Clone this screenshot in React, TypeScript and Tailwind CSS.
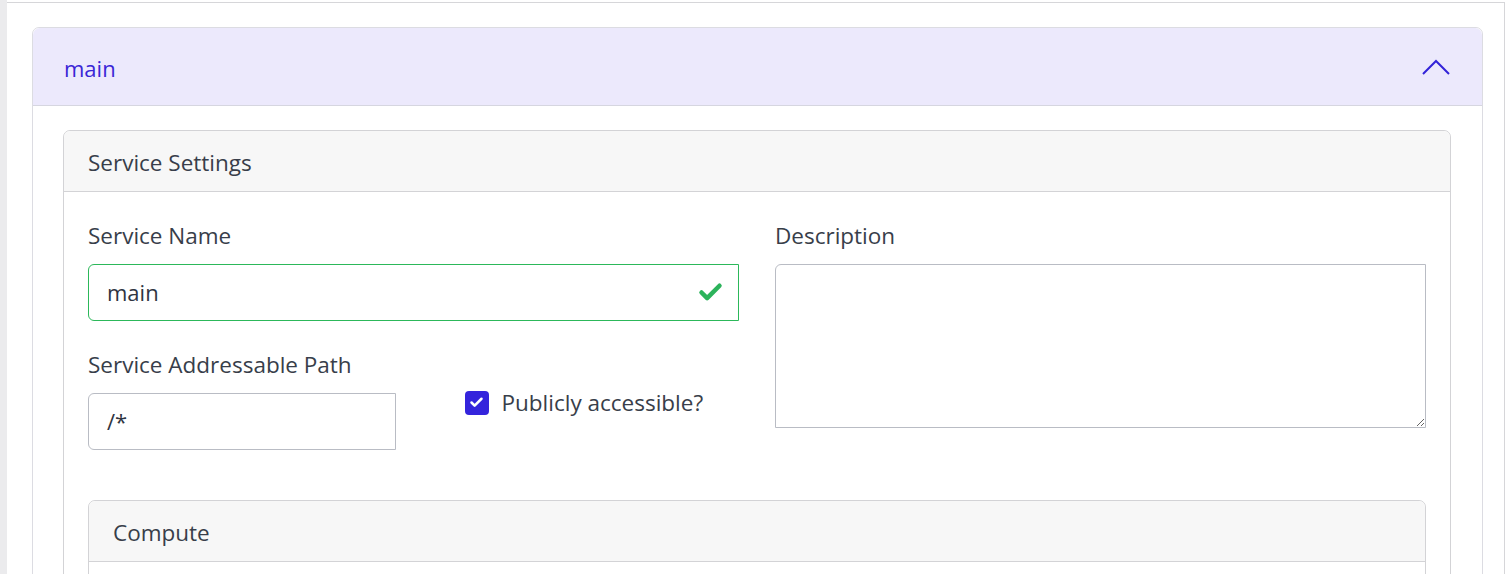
import { Check } from "lucide-react";

const font = { fontFamily: '"Open Sans", "Noto Sans", sans-serif' };

function Card({ title, children }: { title: string; children?: React.ReactNode }) {
  return (
    <div className="rounded-[7px] border border-[#d3d3d6] bg-white">
      <div className="flex h-[61px] items-center rounded-t-[7px] border-b border-[#d3d3d6] bg-[#f7f7f7] px-6 pt-[3px] text-[22.5px] text-[#383e4a]">
        {title}
      </div>
      {children}
    </div>
  );
}

export default function App() {
  return (
    <div className="flex h-[574px] overflow-hidden bg-white" style={font}>
      <div className="w-[7px] shrink-0 bg-[#ebebed]" />
      <div className="mt-[2px] mr-[2px] flex-1 border-t border-r border-[#d6d6d9] pl-[25px] pr-[21px] pt-[24px]">
        <div className="rounded-[7px] border border-[#dcdce2]">
          <div className="flex h-[78px] items-center justify-between rounded-t-[7px] border-b border-[#d6d6e0] bg-[#ece9fc] pl-[31px] pr-[32px]">
            <span className="pt-[3px] text-[22px] text-[#3a26d6]">main</span>
            <svg width="28" height="18" viewBox="0 0 28 18" fill="none" stroke="#3323d8" strokeWidth="2">
              <path d="M1 16 L14 3 L27 16" />
            </svg>
          </div>
          <div className="pl-[30px] pr-[31px] pt-[24px]">
            <Card title="Service Settings">
              <div className="px-6 pt-[30px]">
                <div className="grid grid-cols-2 gap-x-9">
                  <div>
                    <div className="text-[22.5px] leading-[28px] text-[#383e4a]">Service Name</div>
                    <div className="mt-[14px] flex h-[57px] items-center rounded-l-[6px] border border-[#2cb85a] pl-[18px] pr-[14px]">
                      <span className="flex-1 text-[22px] text-[#2f3542]">main</span>
                      <Check className="h-[27px] w-[27px] text-[#2cb35b]" strokeWidth={4} />
                    </div>
                    <div className="mt-[30px] grid grid-cols-2 gap-x-9">
                      <div>
                        <div className="text-[22.5px] leading-[28px] text-[#383e4a]">Service Addressable Path</div>
                        <div className="mt-[14px] flex h-[57px] items-center rounded-l-[6px] border border-[#b9bcc4] pl-[18px] text-[22px] text-[#2f3542]">
                          /*
                        </div>
                      </div>
                      <div className="flex items-start pl-[33px] pt-[35px]">
                        <label className="flex items-center gap-[13px] text-[22.5px] text-[#383e4a]">
                          <span className="flex h-[24px] w-[24px] shrink-0 items-center justify-center rounded-[4px] bg-[#3424dc]">
                            <Check className="h-[15px] w-[15px] text-white" strokeWidth={4} />
                          </span>
                          Publicly accessible?
                        </label>
                      </div>
                    </div>
                  </div>
                  <div>
                    <div className="text-[22.5px] leading-[28px] text-[#383e4a]">Description</div>
                    <textarea className="mt-[14px] block h-[164px] w-full rounded-tl-[6px] border border-[#b9bcc4] outline-none" />
                  </div>
                </div>
                <div className="mt-[50px]">
                  <Card title="Compute">
                    <div className="h-[200px]" />
                  </Card>
                </div>
              </div>
            </Card>
          </div>
        </div>
      </div>
    </div>
  );
}
